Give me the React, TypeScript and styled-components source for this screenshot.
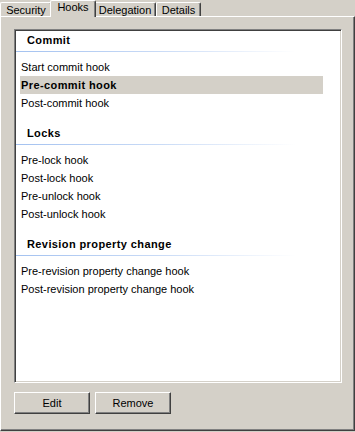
import React from 'react';
import styled, { createGlobalStyle } from 'styled-components';

interface Group {
	title: string;
	hooks: string[];
}

const groups: Group[] = [
	{ title: 'Commit', hooks: ['Start commit hook', 'Pre-commit hook', 'Post-commit hook'] },
	{ title: 'Locks', hooks: ['Pre-lock hook', 'Post-lock hook', 'Pre-unlock hook', 'Post-unlock hook'] },
	{
		title: 'Revision property change',
		hooks: ['Pre-revision property change hook', 'Post-revision property change hook'],
	},
];

const tabs = ['Security', 'Hooks', 'Delegation', 'Details'];
const tabWidths: Record<string, number> = { Security: 52, Hooks: 42, Delegation: 62, Details: 45 };

const selectedHook = 'Pre-commit hook';

const GlobalStyle = createGlobalStyle`
	html, body {
		margin: 0;
		padding: 0;
		overflow: hidden;
		background: #d4d0c8;
	}
	body {
		font-family: 'Liberation Sans', Arial, sans-serif;
		font-size: 11px;
		color: #000;
	}
`;

const Window = styled.div`
	width: 355px;
	height: 432px;
	display: flex;
	flex-direction: column;
	background: #d4d0c8;
	box-sizing: border-box;
	padding-bottom: 1px;
`;

const TabStrip = styled.div`
	display: flex;
	align-items: flex-end;
	height: 16px;
	flex-shrink: 0;
`;

const Tab = styled.div<{ $active?: boolean; $width: number }>`
	box-sizing: border-box;
	width: ${(p) => p.$width + (p.$active ? 4 : 0)}px;
	height: ${(p) => (p.$active ? 17 : 14)}px;
	margin: ${(p) => (p.$active ? '0 -2px -1px -2px' : '0')};
	padding-top: ${(p) => (p.$active ? 0 : 1)}px;
	position: relative;
	z-index: ${(p) => (p.$active ? 2 : 1)};
	background: #d4d0c8;
	border-top: 1px solid #fff;
	border-left: 1px solid #fff;
	border-right: 1px solid #404040;
	border-radius: 2px 2px 0 0;
	box-shadow: inset -1px 0 0 #808080;
	line-height: 13px;
	text-align: center;
	white-space: nowrap;
`;

const Panel = styled.div`
	flex: 1;
	display: flex;
	flex-direction: column;
	border-top: 1px solid #fff;
	border-left: 1px solid #fff;
	border-right: 1px solid #404040;
	border-bottom: 1px solid #404040;
	box-shadow: inset -1px -1px 0 #808080;
	padding: 12px 12px 16px 13px;
	min-height: 0;
`;

const ListBox = styled.div`
	flex: 1;
	background: #fff;
	border: 1px solid;
	border-color: #808080 #fff #fff #808080;
	box-shadow: inset 1px 1px 0 #404040, inset -1px -1px 0 #d4d0c8;
	padding: 1px;
	overflow: hidden;
`;

const GroupBlock = styled.div`
	& + & {
		margin-top: 12px;
	}
`;

const GroupTitle = styled.div`
	padding: 3px 0 0 11px;
	margin-bottom: 4px;
	line-height: 13px;
	font-weight: bold;
	letter-spacing: 0.4px;
`;

const GroupRule = styled.div`
	height: 1px;
	width: 280px;
	margin-bottom: 6px;
	background: linear-gradient(to right, #a4c2f0 0%, #c8daf6 50%, #ffffff 100%);
`;

const HookRow = styled.div<{ $selected?: boolean }>`
	width: 303px;
	height: 18px;
	margin-left: 4px;
	padding-left: 1px;
	box-sizing: border-box;
	line-height: 18px;
	white-space: nowrap;
	background: ${(p) => (p.$selected ? '#d4d0c8' : 'transparent')};
	font-weight: ${(p) => (p.$selected ? 'bold' : 'normal')};
	letter-spacing: ${(p) => (p.$selected ? '0.4px' : '0')};
`;

const ButtonRow = styled.div`
	display: flex;
	gap: 5px;
	margin-top: 9px;
	flex-shrink: 0;
`;

const Button = styled.button`
	width: 76px;
	height: 22px;
	padding: 0;
	font-family: 'Liberation Sans', Arial, sans-serif;
	font-size: 11px;
	color: #000;
	background: #d4d0c8;
	border: 1px solid;
	border-color: #fff #404040 #404040 #fff;
	box-shadow: inset -1px -1px 0 #808080, inset 1px 1px 0 #d4d0c8;
	border-radius: 0;
	line-height: 18px;
`;

export default function App(): JSX.Element {
	return (
		<>
			<GlobalStyle />
			<Window>
				<TabStrip>
					{tabs.map((t) => (
						<Tab key={t} $active={t === 'Hooks'} $width={tabWidths[t]}>
							{t}
						</Tab>
					))}
				</TabStrip>
				<Panel>
					<ListBox>
						{groups.map((g) => (
							<GroupBlock key={g.title}>
								<GroupTitle>{g.title}</GroupTitle>
								<GroupRule />
								{g.hooks.map((h) => (
									<HookRow key={h} $selected={h === selectedHook}>
										{h}
									</HookRow>
								))}
							</GroupBlock>
						))}
					</ListBox>
					<ButtonRow>
						<Button>Edit</Button>
						<Button>Remove</Button>
					</ButtonRow>
				</Panel>
			</Window>
		</>
	);
}
